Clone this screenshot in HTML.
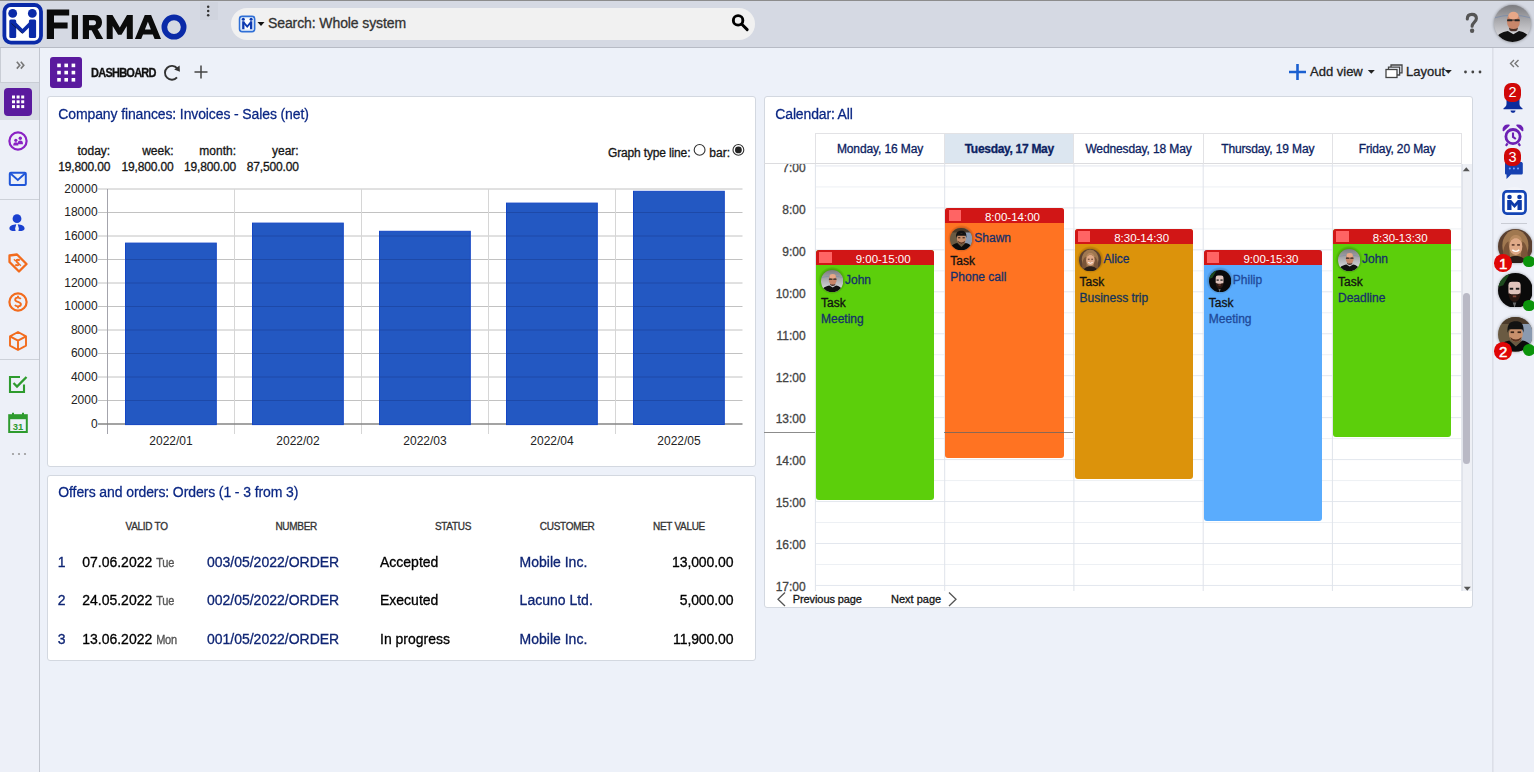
<!DOCTYPE html>
<html><head><meta charset="utf-8">
<style>
*{box-sizing:border-box}
html,body{margin:0;padding:0}
body{width:1534px;height:772px;overflow:hidden;position:relative;background:#edf1f9;font-family:"Liberation Sans",sans-serif;color:#222}
.a{position:absolute}
.t{position:absolute;line-height:1;white-space:nowrap;-webkit-text-stroke:0.3px currentColor}
.hdr{left:0;top:0;width:1534px;height:48px;background:#d5d9e3;border-top:1px solid #8c8c8c;border-bottom:1px solid #b7bbc5}
.panel{position:absolute;background:#fff;border:1px solid #d3d8e0;border-radius:3px}
.nv{color:#0f2574}
.sy{transform:scaleY(1.09);transform-origin:0 0.846em}
.tx{color:#151515}
.tk{color:#000}
.ptitle{font-size:14px;letter-spacing:-0.12px;color:#0b2784;-webkit-text-stroke:0.25px currentColor}
</style></head><body>
<svg width="0" height="0" style="position:absolute">
<defs>
<clipPath id="cc"><circle cx="20" cy="20" r="20"/></clipPath>
<linearGradient id="gJohn" x1="0" y1="0" x2="0" y2="1"><stop offset="0" stop-color="#7c7c80"/><stop offset="0.55" stop-color="#b8b8bc"/><stop offset="1" stop-color="#e4e4e8"/></linearGradient>
<symbol id="avJohn" viewBox="0 0 40 40"><g clip-path="url(#cc)">
<rect width="40" height="40" fill="url(#gJohn)"/>
<path d="M0 14 Q20 8 40 14" stroke="#5a7ab0" stroke-width="0.8" fill="none" opacity="0.6"/>
<ellipse cx="21" cy="17.5" rx="7" ry="9.3" fill="#c8866a"/>
<ellipse cx="21" cy="11.5" rx="5.5" ry="4.2" fill="#e8a888"/>
<rect x="14.2" y="15.3" width="5.6" height="2.4" rx="0.8" fill="#262626"/><rect x="22.2" y="15.3" width="5.6" height="2.4" rx="0.8" fill="#262626"/>
<rect x="19.6" y="15.8" width="2.8" height="0.9" fill="#262626"/>
<path d="M16 24.5 Q21 27.5 26 24.5 L25 27.5 Q21 29.5 17 27.5Z" fill="#4a3028"/>
<path d="M0 40 C2 32 9 29 15 28 L21 31.5 L27 28 C33 29 38 32 40 40Z" fill="#101010"/>
</g></symbol>
<symbol id="avShawn" viewBox="0 0 40 40"><g clip-path="url(#cc)">
<rect width="40" height="40" fill="#6a5a42"/>
<rect x="27" y="0" width="13" height="40" fill="#8a9ab0"/>
<rect x="0" y="0" width="40" height="8" fill="#4a3a2a"/>
<path d="M11 18 C10 7 15 5 20.5 5 C26 5 30 7 29.5 18 C28 12 25 10.5 20.5 10.5 C16 10.5 13 12 11 18Z" fill="#121212"/>
<ellipse cx="20.5" cy="19.5" rx="8" ry="9" fill="#c8906c"/>
<path d="M12.5 14 C14 10.5 17 10 20.5 10 C24 10 27 10.5 28.5 14 Z" fill="#121212"/>
<rect x="14.5" y="16.5" width="4" height="2" fill="#3a2418"/><rect x="22.5" y="16.5" width="4" height="2" fill="#3a2418"/>
<path d="M14 23 Q20.5 29 27 23 L26 26 Q20.5 31 15 26Z" fill="#5a3422"/>
<path d="M0 40 C1 31 7 28 13 27 L20.5 34 L28 27 C34 28 39 31 40 40Z" fill="#0c0c0c"/>
</g></symbol>
<symbol id="avAlice" viewBox="0 0 40 40"><g clip-path="url(#cc)">
<rect width="40" height="40" fill="#5a4030"/>
<ellipse cx="20" cy="19" rx="15" ry="18" fill="#a07850"/>
<path d="M6 34 C5 24 8 16 12 14 L14 34Z M34 34 C35 24 32 16 28 14 L26 34Z" fill="#7a5438"/>
<ellipse cx="20.5" cy="20" rx="7.5" ry="9.8" fill="#e0aa88"/>
<path d="M13 15 C14 8 18 7 20.5 7 C23 7 27 8 28 15 C25 11 22 10.5 20.5 10.5 C19 10.5 16 11 13 15Z" fill="#b88a60"/>
<rect x="15.8" y="17.5" width="3.2" height="1.6" fill="#4a2a20"/><rect x="22" y="17.5" width="3.2" height="1.6" fill="#4a2a20"/>
<path d="M16.5 24 Q20.5 27.5 24.5 24" stroke="#fff" stroke-width="1.6" fill="none"/>
<path d="M8 40 C10 33 15 31 20.5 31 C26 31 31 33 33 40Z" fill="#2a1e18"/>
</g></symbol>
<symbol id="avPhilip" viewBox="0 0 40 40"><g clip-path="url(#cc)">
<rect width="40" height="40" fill="#0a0a0a"/>
<path d="M0 0 H14 L6 14 L0 16Z" fill="#1e4a1e"/>
<rect x="12" y="10" width="14" height="16" rx="4" fill="#e0c4bc"/>
<rect x="13.5" y="17" width="4" height="2.2" fill="#1a1a1a"/><rect x="20.5" y="17" width="4" height="2.2" fill="#1a1a1a"/>
<path d="M12 22 C12.5 31 16 33 19 33 C22 33 25.5 31 26 22 C24 25 22 24.5 19 24.5 C16 24.5 14 25 12 22Z" fill="#2a1812"/>
<path d="M17 26 H21 V28 H17Z" fill="#8a4a3a"/>
<path d="M17 34 L19 40 L21 34Z" fill="#6a6a6a"/>
</g></symbol>
</defs></svg>

<!-- HEADER -->
<div class="a hdr"></div>
<!-- logo icon -->
<svg class="a" style="left:0;top:0" width="48" height="48" viewBox="0 0 48 48">
  <rect x="4.4" y="5" width="36.6" height="37.6" rx="6.5" fill="#fff" stroke="#0a2aa8" stroke-width="3.8"/>
  <circle cx="12.7" cy="13.4" r="4.4" fill="#0a2aa8"/>
  <circle cx="32.3" cy="13.4" r="4.4" fill="#0a2aa8"/>
  <rect x="9.3" y="19.6" width="6.9" height="18.3" rx="1.5" fill="#0a2aa8"/>
  <rect x="28.9" y="19.6" width="7.2" height="18.3" rx="1.5" fill="#0a2aa8"/>
  <path d="M12.5 21.5 L22.5 31.5 L30.5 23.5" fill="none" stroke="#0a2aa8" stroke-width="3.8" stroke-linejoin="round"/><path d="M11.5 23.5 L22.5 33.5" fill="none" stroke="#111" stroke-width="1" opacity="0.6"/>
</svg>
<!-- FIRMAO letters -->
<svg class="a" style="left:0;top:0" width="200" height="48" viewBox="0 0 200 48">
  <g fill="#0b0b0b">
    <path d="M46.8 9.4 H69.2 V15.4 H54 V22.4 H67.6 V28.6 H54 V39.1 H46.8 Z"/>
    <rect x="71.8" y="15.1" width="6.2" height="24"/>
    <path d="M82.8 15.1 H94 C99.5 15.1 102 18.3 102 22.6 C102 25.9 100.3 28.2 97.6 29.3 L103.2 39.1 H96.3 L91.6 30.3 H89 V39.1 H82.8 Z M89 20.2 V25.3 H93.6 C95.3 25.3 96 24.2 96 22.8 C96 21.3 95.3 20.2 93.6 20.2 Z"/>
    <path d="M106.7 39.1 V15.1 H112.5 L119.8 27.5 L127 15.1 H132.8 V39.1 H126.8 V26 L121.5 34.8 H118.1 L112.7 26 V39.1 Z"/>
    <path d="M134.9 39.1 L144.8 15.1 H151.1 L161 39.1 H154.6 L152.8 34.5 H143 L141.2 39.1 Z M144.9 29.4 H150.9 L147.9 21.7 Z"/>
  </g>
  <circle cx="174" cy="27.1" r="9.65" fill="none" stroke="#0a2aa8" stroke-width="5.7"/>
</svg>
<!-- vertical dots -->
<div class="a" style="left:200px;top:2px;width:18px;height:18px;background:#d0d4de"></div>
<svg class="a" style="left:200px;top:2px" width="18" height="18"><g fill="#333"><circle cx="8.2" cy="4.8" r="1.25"/><circle cx="8.2" cy="9.1" r="1.25"/><circle cx="8.2" cy="13.3" r="1.25"/></g></svg>
<!-- search -->
<div class="a" style="left:231px;top:8px;width:524px;height:32px;border-radius:16px;background:#f1f1f1"></div>
<svg class="a" style="left:238px;top:15px" width="18" height="18" viewBox="0 0 18 18">
  <rect x="1.6" y="1.3" width="15" height="15.3" rx="2.6" fill="#fff" stroke="#2f6fd6" stroke-width="1.7"/>
  <rect x="3" y="2.7" width="12.2" height="12.5" rx="1" fill="none" stroke="#bcd4f4" stroke-width="1"/>
  <circle cx="5.3" cy="4.2" r="1.5" fill="#0d3ab0"/><circle cx="13.1" cy="4.2" r="1.5" fill="#0d3ab0"/>
  <path d="M5.3 6.3 V14.3 M13.1 6.3 V14.3" fill="none" stroke="#0d3ab0" stroke-width="2.3"/>
  <path d="M5.6 7.3 L9.2 11.6 L12.8 7.3" fill="none" stroke="#0d3ab0" stroke-width="1.8"/>
</svg>
<svg class="a" style="left:257px;top:21px" width="8" height="6"><path d="M0.5 1 H7.5 L4 5 Z" fill="#111"/></svg>
<div class="t" style="left:268px;top:16.4px;font-size:14px;letter-spacing:-0.1px;color:#333">Search: Whole system</div>
<svg class="a" style="left:728px;top:11px" width="24" height="24" viewBox="0 0 24 24">
  <circle cx="10.1" cy="9.4" r="4.75" fill="none" stroke="#000" stroke-width="2.9"/>
  <path d="M13.6 13 L19.2 18.6" stroke="#000" stroke-width="2.9" stroke-linecap="round"/>
</svg>
<!-- help -->
<svg class="a" style="left:1462px;top:10px" width="20" height="26" viewBox="0 0 20 26"><path d="M5.3 9 C5.3 5.6 7.4 4.4 9.9 4.4 C12.5 4.4 14.4 5.9 14.4 8.5 C14.4 11.8 10.1 12.4 10.1 16.3" fill="none" stroke="#555" stroke-width="3.1" stroke-linecap="round"/><circle cx="10.1" cy="20.8" r="2.2" fill="#555"/></svg>
<!-- user avatar -->
<svg class="a" style="left:1494px;top:5px;filter:drop-shadow(0 0 1.5px rgba(0,0,0,0.4))" width="37" height="37" viewBox="0 0 40 40"><use href="#avJohn"/></svg>

<!-- LEFT SIDEBAR -->
<div class="a" style="left:0;top:48px;width:40px;height:724px;background:#edf0f8;border-right:1px solid #c2c6cf"></div>
<div class="a" style="left:0;top:48px;width:39px;height:35px;background:#e9ecf3;border-left:1px solid #c9cdd5;border-bottom:1px solid #c9cdd5"></div>
<svg class="a" style="left:14px;top:58px" width="14" height="14" viewBox="0 0 14 14"><path d="M2.8 3.8 L5.8 7.2 L2.8 10.6 M6.8 3.8 L9.8 7.2 L6.8 10.6" fill="none" stroke="#777" stroke-width="1.6"/></svg>
<div class="a" style="left:0;top:83px;width:39px;height:37px;background:#d8dce5"></div>
<div class="a" style="left:4px;top:88px;width:28px;height:28px;border-radius:4px;background:#5a1a9e"></div>
<svg class="a" style="left:4px;top:88px" width="28" height="28"><g fill="#fff">
<rect x="8" y="7.5" width="3" height="3"/><rect x="12.6" y="7.5" width="3" height="3"/><rect x="17.2" y="7.5" width="3" height="3"/>
<rect x="8" y="12.3" width="3" height="3"/><rect x="12.6" y="12.3" width="3" height="3"/><rect x="17.2" y="12.3" width="3" height="3"/>
<rect x="8" y="17.1" width="3" height="3"/><rect x="12.6" y="17.1" width="3" height="3"/><rect x="17.2" y="17.1" width="3" height="3"/></g></svg>
<!-- contacts circle -->
<svg class="a" style="left:6px;top:129px" width="24" height="24" viewBox="0 0 24 24">
  <circle cx="12" cy="12" r="8.6" fill="none" stroke="#8a22c4" stroke-width="2.2"/>
  <g fill="#8a22c4"><circle cx="14.3" cy="9.3" r="1.7"/><path d="M11.6 15.2 C11.6 12.4 12.6 11.4 14.3 11.4 C16 11.4 17 12.4 17 15.2 Z"/>
  <circle cx="9.8" cy="11.3" r="1.6"/><path d="M7.2 16.6 C7.2 14.2 8.1 13.3 9.8 13.3 C11.5 13.3 12.4 14.2 12.4 16.6 Z"/></g>
</svg>
<!-- mail -->
<svg class="a" style="left:8px;top:171px" width="20" height="16" viewBox="0 0 20 16">
  <rect x="1.8" y="1.8" width="16" height="12.2" rx="1" fill="none" stroke="#1f55d8" stroke-width="2"/>
  <path d="M2.5 2.5 L9.8 9 L17 2.5" fill="none" stroke="#1f55d8" stroke-width="1.8"/>
</svg>
<div class="a" style="left:0;top:199px;width:39px;height:1px;background:#cdd1d9"></div>
<!-- person -->
<svg class="a" style="left:7px;top:212px" width="22" height="22" viewBox="0 0 22 22">
  <g fill="#1a40d0"><circle cx="10" cy="6.7" r="4.4"/>
  <path d="M9.3 12.3 C5.5 12.5 2.4 14 2.4 16.5 C2.4 18.5 5.5 19.3 8.6 19 L8.1 16.5 Z"/>
  <path d="M10.7 12.3 C14.5 12.5 17.6 14 17.6 16.5 C17.6 18.5 14.5 19.3 11.4 19 L11.9 16.5 Z"/></g>
</svg>
<!-- tag -->
<svg class="a" style="left:7px;top:252px" width="22" height="22" viewBox="0 0 22 22">
  <path d="M2.5 3.5 L10 2.5 L19.5 12 L12 19.5 L2.5 10 Z" fill="none" stroke="#f26b1d" stroke-width="2.3" stroke-linejoin="round"/>
  <path d="M12.8 8.6 C11.5 7.3 9.6 7.6 9.3 8.8 C9 10.2 12 10.8 11.7 12.3 C11.4 13.5 9.5 13.6 8.3 12.4 M8 7.6 L7.2 8.4 M13.6 12.6 L12.8 13.4" fill="none" stroke="#f26b1d" stroke-width="2.1"/>
</svg>
<!-- dollar -->
<svg class="a" style="left:7px;top:291px" width="22" height="22" viewBox="0 0 22 22">
  <circle cx="11" cy="11" r="8.6" fill="none" stroke="#f26b1d" stroke-width="2.2"/>
  <path d="M13.8 7.9 C13 6.9 11.8 6.6 10.8 6.6 C9.2 6.6 8.2 7.5 8.2 8.7 C8.2 11.3 13.9 10.6 13.9 13.3 C13.9 14.6 12.7 15.4 11 15.4 C9.8 15.4 8.6 14.9 7.9 14 M11 4.8 V6.6 M11 15.4 V17.2" fill="none" stroke="#f26b1d" stroke-width="1.9"/>
</svg>
<!-- box -->
<svg class="a" style="left:7px;top:330px" width="22" height="22" viewBox="0 0 22 22">
  <path d="M11 2 L19 6.3 V15.6 L11 20 L3 15.6 V6.3 Z M3 6.3 L11 10.7 L19 6.3 M11 10.7 V20" fill="none" stroke="#f26b1d" stroke-width="1.9" stroke-linejoin="round"/>
</svg>
<div class="a" style="left:0;top:359px;width:39px;height:1px;background:#cdd1d9"></div>
<!-- check -->
<svg class="a" style="left:7px;top:373px" width="22" height="22" viewBox="0 0 22 22">
  <path d="M17 11.5 V19 H3 V4 H13" fill="none" stroke="#2e9b2e" stroke-width="2.1"/>
  <path d="M6.5 10 L10 13.5 L19.5 4" fill="none" stroke="#2e9b2e" stroke-width="2.3"/>
</svg>
<!-- calendar -->
<svg class="a" style="left:7px;top:411px" width="22" height="23" viewBox="0 0 22 23">
  <rect x="2.2" y="4.2" width="17.6" height="16.8" fill="none" stroke="#2e9b2e" stroke-width="2"/>
  <rect x="2.2" y="4.2" width="17.6" height="4" fill="#2e9b2e"/>
  <path d="M6 1.8 V5 M16 1.8 V5" stroke="#2e9b2e" stroke-width="2"/>
  <text x="11" y="18.8" text-anchor="middle" font-family="Liberation Sans" font-weight="700" font-size="9.5" fill="#2e9b2e">31</text>
</svg>
<svg class="a" style="left:10px;top:451px" width="18" height="6"><g fill="#999"><circle cx="3" cy="3" r="1.1"/><circle cx="9" cy="3" r="1.1"/><circle cx="15" cy="3" r="1.1"/></g></svg>

<!-- RIGHT SIDEBAR -->
<div class="a" style="left:1492px;top:48px;width:42px;height:724px;background:#edf0f8;border-left:1px solid #dcdfe8"></div><div class="a" style="left:1493px;top:48px;width:1px;height:724px;background:#e3e6ee"></div>


<svg class="a" style="left:1507px;top:57px" width="14" height="14" viewBox="0 0 14 14"><path d="M11.5 3 L8 6.5 L11.5 10 M7 3 L3.5 6.5 L7 10" fill="none" stroke="#777" stroke-width="1.4"/></svg>
<svg class="a" style="left:1502px;top:84px" width="22" height="30" viewBox="0 0 22 30"><path d="M4.5 12 C4.5 6.5 7 4 11 4 C15 4 17.5 6.5 17.5 12 V20 C17.5 22 19 23.5 20.5 24.3 V25.3 H1.5 V24.3 C3 23.5 4.5 22 4.5 20 Z" fill="#0c2c9c"/><path d="M8.5 26.5 H13.5 C13.3 28 12.4 28.8 11 28.8 C9.6 28.8 8.7 28 8.5 26.5 Z" fill="#0c2c9c"/></svg>
<div class="a" style="left:1504px;top:82.6px;width:17px;height:19px;border-radius:7px;background:#d00808"></div>
<div class="t" style="left:1504px;width:17px;text-align:center;top:85px;font-size:14.5px;color:#fff;-webkit-text-stroke:0">2</div>
<svg class="a" style="left:1502px;top:124px" width="22" height="23" viewBox="0 0 22 23"><circle cx="11" cy="12.6" r="7.1" fill="none" stroke="#6c20b4" stroke-width="2.8"/><path d="M11 8.6 V12.9 L13.8 15" fill="none" stroke="#6c20b4" stroke-width="2.1"/><path d="M1.5 6.3 C1.2 2.8 3.5 0.9 6.8 1.4 Z M20.5 6.3 C20.8 2.8 18.5 0.9 15.2 1.4 Z" fill="#6c20b4" stroke="#6c20b4" stroke-width="1.8" stroke-linejoin="round"/><path d="M5.6 19.3 L3.9 21.8 M16.4 19.3 L18.1 21.8" stroke="#6c20b4" stroke-width="2.2"/></svg>
<svg class="a" style="left:1502px;top:160px" width="22" height="22" viewBox="0 0 22 22"><path d="M3 3.5 C3 2.5 3.6 2 4.5 2 H19 C20 2 20.8 2.6 20.8 3.5 V13 C20.8 14 20 14.6 19 14.6 H9 L4.5 19 V14.6 C3.6 14.6 3 14 3 13 Z" fill="#1640b0"/><g fill="#7aa0ff"><circle cx="7.8" cy="8.5" r="1"/><circle cx="11.9" cy="8.5" r="1"/><circle cx="16" cy="8.5" r="1"/></g></svg>
<div class="a" style="left:1504px;top:148px;width:17px;height:18px;border-radius:7px;background:#d00808"></div>
<div class="t" style="left:1504px;width:17px;text-align:center;top:150px;font-size:14.5px;color:#fff;-webkit-text-stroke:0">3</div>
<div class="a" style="left:1499px;top:187px;width:31px;height:31px;border-radius:50%;background:#f2f4fa"></div>
<svg class="a" style="left:1502px;top:190px" width="25" height="25" viewBox="0 0 25 25"><rect x="1.4" y="1.4" width="22.2" height="22.2" rx="3.5" fill="#fff" stroke="#1545b5" stroke-width="2.6"/><circle cx="7.5" cy="7" r="2.3" fill="#0d3aa8"/><circle cx="17.5" cy="7" r="2.3" fill="#0d3aa8"/><rect x="5.2" y="10" width="4.3" height="10" fill="#0d3aa8"/><rect x="15.5" y="10" width="4.3" height="10" fill="#0d3aa8"/><path d="M8.5 11.5 L12.5 16 L16.5 11.5" fill="none" stroke="#0d3aa8" stroke-width="2.8"/></svg>
<div class="a" style="left:1500.5px;top:223px;width:26.5px;height:1px;background:#c9ccd4"></div>
<svg class="a" style="left:1497.5px;top:228.7px;filter:drop-shadow(0 0 1.5px rgba(0,0,0,0.35));" width="34.8" height="34.8" viewBox="0 0 40 40"><use href="#avAlice"/></svg>
<div class="a" style="left:1523.3px;top:255.89999999999998px;width:11.5px;height:11.5px;border-radius:50%;background:#0b940b"></div>
<div class="a" style="left:1494.3px;top:254.0px;width:17.5px;height:17.5px;border-radius:50%;background:#e00606"></div>
<div class="t" style="left:1494.3px;width:17.5px;text-align:center;top:256.0px;font-size:15px;font-weight:400;color:#fff;-webkit-text-stroke:0.5px #fff">1</div>
<svg class="a" style="left:1497.5px;top:272.5px;filter:drop-shadow(0 0 1.5px rgba(0,0,0,0.35));" width="34.8" height="34.8" viewBox="0 0 40 40"><use href="#avPhilip"/></svg>
<div class="a" style="left:1523.3px;top:299.7px;width:11.5px;height:11.5px;border-radius:50%;background:#0b940b"></div>
<svg class="a" style="left:1497.5px;top:317px;filter:drop-shadow(0 0 1.5px rgba(0,0,0,0.35));" width="34.8" height="34.8" viewBox="0 0 40 40"><use href="#avShawn"/></svg>
<div class="a" style="left:1523.3px;top:344.2px;width:11.5px;height:11.5px;border-radius:50%;background:#0b940b"></div>
<div class="a" style="left:1494.3px;top:342.3px;width:17.5px;height:17.5px;border-radius:50%;background:#e00606"></div>
<div class="t" style="left:1494.3px;width:17.5px;text-align:center;top:344.3px;font-size:15px;font-weight:400;color:#fff;-webkit-text-stroke:0.5px #fff">2</div>
<!-- TOOLBAR -->
<div class="a" style="left:50px;top:57px;width:32px;height:31px;border-radius:3px;background:#5a1a9e"></div>
<svg class="a" style="left:50px;top:57px" width="32" height="31"><g fill="#fff">
<rect x="7.2" y="6.6" width="3.6" height="3.6"/><rect x="14.4" y="6.6" width="3.6" height="3.6"/><rect x="21.6" y="6.6" width="3.6" height="3.6"/>
<rect x="7.2" y="13.8" width="3.6" height="3.6"/><rect x="14.4" y="13.8" width="3.6" height="3.6"/><rect x="21.6" y="13.8" width="3.6" height="3.6"/>
<rect x="7.2" y="21" width="3.6" height="3.6"/><rect x="14.4" y="21" width="3.6" height="3.6"/><rect x="21.6" y="21" width="3.6" height="3.6"/></g></svg>
<div class="t" style="left:91px;top:67.7px;font-size:11px;font-weight:700;letter-spacing:-0.75px;color:#111;transform:scaleY(1.12);transform-origin:0 9.3px">DASHBOARD</div>
<svg class="a" style="left:162px;top:62px" width="20" height="20" viewBox="0 0 20 20">
  <path d="M15.2 6.4 A6.9 6.9 0 1 0 15 15.4" fill="none" stroke="#333" stroke-width="1.9"/>
  <path d="M17.6 3.4 L17.9 9.8 L12.2 7.6 Z" fill="#333"/>
</svg>
<svg class="a" style="left:193px;top:64px" width="16" height="16" viewBox="0 0 16 16"><path d="M8 1.6 V14.4 M1.5 8 H14.5" stroke="#444" stroke-width="1.5"/></svg>
<!-- add view etc -->
<svg class="a" style="left:1288px;top:63px" width="19" height="18" viewBox="0 0 19 18"><path d="M9.5 1 V17 M1 9 H18" stroke="#1a5fd0" stroke-width="2.6"/></svg>
<div class="t" style="left:1310px;top:64.8px;font-size:13px;color:#222">Add view</div>
<svg class="a" style="left:1367px;top:69px" width="9" height="6"><path d="M0.8 1 H7.8 L4.3 4.8 Z" fill="#222"/></svg>
<svg class="a" style="left:1385px;top:64px" width="18" height="15" viewBox="0 0 18 15">
  <rect x="1" y="5.5" width="11" height="8" fill="#fff" stroke="#444" stroke-width="1.3"/>
  <path d="M3.5 5.5 V3.2 H14.6 V11 H12 M6 3.2 V1 H17 V8.8 H14.6" fill="none" stroke="#444" stroke-width="1.3"/>
</svg>
<div class="t" style="left:1406px;top:64.8px;font-size:13px;color:#222">Layout</div>
<svg class="a" style="left:1444px;top:69px" width="9" height="6"><path d="M0.8 1 H7.8 L4.3 4.8 Z" fill="#222"/></svg>
<svg class="a" style="left:1463px;top:68px" width="20" height="8"><g fill="#444"><circle cx="2.5" cy="4" r="1.4"/><circle cx="9.8" cy="4" r="1.4"/><circle cx="17" cy="4" r="1.4"/></g></svg>


<div class="panel" style="left:47px;top:96px;width:709px;height:371px"></div>
<div class="t ptitle sy" style="left:58.3px;top:106.6px">Company finances: Invoices - Sales (net)</div>
<div class="t tx" style="right:1423.8px;top:144.8px;font-size:12px">today:</div>
<div class="t tx" style="right:1423.8px;top:160.7px;font-size:12px;letter-spacing:-0.15px">19,800.00</div>
<div class="t tx" style="right:1360.5px;top:144.8px;font-size:12px">week:</div>
<div class="t tx" style="right:1360.5px;top:160.7px;font-size:12px;letter-spacing:-0.15px">19,800.00</div>
<div class="t tx" style="right:1298px;top:144.8px;font-size:12px">month:</div>
<div class="t tx" style="right:1298px;top:160.7px;font-size:12px;letter-spacing:-0.15px">19,800.00</div>
<div class="t tx" style="right:1235.3px;top:144.8px;font-size:12px">year:</div>
<div class="t tx" style="right:1235.3px;top:160.7px;font-size:12px;letter-spacing:-0.15px">87,500.00</div>
<div class="t tx" style="left:608px;top:146.5px;font-size:12px;letter-spacing:-0.15px">Graph type line:</div>
<div class="t tx" style="left:709.3px;top:146.5px;font-size:12px">bar:</div>
<svg class="a" style="left:692px;top:143px" width="15" height="14"><circle cx="7.6" cy="6.9" r="5.4" fill="#fff" stroke="#333" stroke-width="1.1"/></svg>
<svg class="a" style="left:731px;top:143px" width="15" height="14"><circle cx="7.4" cy="6.9" r="5.4" fill="#fff" stroke="#333" stroke-width="1.1"/><circle cx="7.4" cy="6.9" r="3.4" fill="#222"/></svg>
<svg class="a" style="left:0;top:0" width="760" height="470"><line x1="98" y1="400.5" x2="742.5" y2="400.5" stroke="#c2c2c2" stroke-width="1"/><line x1="98" y1="377.0" x2="742.5" y2="377.0" stroke="#c2c2c2" stroke-width="1"/><line x1="98" y1="353.5" x2="742.5" y2="353.5" stroke="#c2c2c2" stroke-width="1"/><line x1="98" y1="330.0" x2="742.5" y2="330.0" stroke="#c2c2c2" stroke-width="1"/><line x1="98" y1="306.5" x2="742.5" y2="306.5" stroke="#c2c2c2" stroke-width="1"/><line x1="98" y1="283.0" x2="742.5" y2="283.0" stroke="#c2c2c2" stroke-width="1"/><line x1="98" y1="259.5" x2="742.5" y2="259.5" stroke="#c2c2c2" stroke-width="1"/><line x1="98" y1="236.0" x2="742.5" y2="236.0" stroke="#c2c2c2" stroke-width="1"/><line x1="98" y1="212.5" x2="742.5" y2="212.5" stroke="#c2c2c2" stroke-width="1"/><line x1="98" y1="189.0" x2="742.5" y2="189.0" stroke="#c2c2c2" stroke-width="1"/><line x1="107.5" y1="189" x2="107.5" y2="434" stroke="#d6d6d6" stroke-width="1"/><line x1="234.5" y1="189" x2="234.5" y2="434" stroke="#d6d6d6" stroke-width="1"/><line x1="361.5" y1="189" x2="361.5" y2="434" stroke="#d6d6d6" stroke-width="1"/><line x1="488.5" y1="189" x2="488.5" y2="434" stroke="#d6d6d6" stroke-width="1"/><line x1="615.5" y1="189" x2="615.5" y2="434" stroke="#d6d6d6" stroke-width="1"/><line x1="107.5" y1="189" x2="107.5" y2="434" stroke="#a4a4ac" stroke-width="1"/><line x1="98" y1="424.0" x2="742.5" y2="424.0" stroke="#858585" stroke-width="1.4"/><rect x="125.5" y="243.1" width="90.8" height="181.5" fill="#2358c2" stroke="#1446c4" stroke-width="1"/><line x1="126" y1="400.5" x2="215.8" y2="400.5" stroke="rgba(0,0,40,0.17)" stroke-width="1"/><line x1="126" y1="377.0" x2="215.8" y2="377.0" stroke="rgba(0,0,40,0.17)" stroke-width="1"/><line x1="126" y1="353.5" x2="215.8" y2="353.5" stroke="rgba(0,0,40,0.17)" stroke-width="1"/><line x1="126" y1="330.0" x2="215.8" y2="330.0" stroke="rgba(0,0,40,0.17)" stroke-width="1"/><line x1="126" y1="306.5" x2="215.8" y2="306.5" stroke="rgba(0,0,40,0.17)" stroke-width="1"/><line x1="126" y1="283.0" x2="215.8" y2="283.0" stroke="rgba(0,0,40,0.17)" stroke-width="1"/><line x1="126" y1="259.5" x2="215.8" y2="259.5" stroke="rgba(0,0,40,0.17)" stroke-width="1"/><rect x="252.5" y="223.1" width="90.8" height="201.5" fill="#2358c2" stroke="#1446c4" stroke-width="1"/><line x1="253" y1="400.5" x2="342.8" y2="400.5" stroke="rgba(0,0,40,0.17)" stroke-width="1"/><line x1="253" y1="377.0" x2="342.8" y2="377.0" stroke="rgba(0,0,40,0.17)" stroke-width="1"/><line x1="253" y1="353.5" x2="342.8" y2="353.5" stroke="rgba(0,0,40,0.17)" stroke-width="1"/><line x1="253" y1="330.0" x2="342.8" y2="330.0" stroke="rgba(0,0,40,0.17)" stroke-width="1"/><line x1="253" y1="306.5" x2="342.8" y2="306.5" stroke="rgba(0,0,40,0.17)" stroke-width="1"/><line x1="253" y1="283.0" x2="342.8" y2="283.0" stroke="rgba(0,0,40,0.17)" stroke-width="1"/><line x1="253" y1="259.5" x2="342.8" y2="259.5" stroke="rgba(0,0,40,0.17)" stroke-width="1"/><line x1="253" y1="236.0" x2="342.8" y2="236.0" stroke="rgba(0,0,40,0.17)" stroke-width="1"/><rect x="379.5" y="231.3" width="90.8" height="193.3" fill="#2358c2" stroke="#1446c4" stroke-width="1"/><line x1="380" y1="400.5" x2="469.8" y2="400.5" stroke="rgba(0,0,40,0.17)" stroke-width="1"/><line x1="380" y1="377.0" x2="469.8" y2="377.0" stroke="rgba(0,0,40,0.17)" stroke-width="1"/><line x1="380" y1="353.5" x2="469.8" y2="353.5" stroke="rgba(0,0,40,0.17)" stroke-width="1"/><line x1="380" y1="330.0" x2="469.8" y2="330.0" stroke="rgba(0,0,40,0.17)" stroke-width="1"/><line x1="380" y1="306.5" x2="469.8" y2="306.5" stroke="rgba(0,0,40,0.17)" stroke-width="1"/><line x1="380" y1="283.0" x2="469.8" y2="283.0" stroke="rgba(0,0,40,0.17)" stroke-width="1"/><line x1="380" y1="259.5" x2="469.8" y2="259.5" stroke="rgba(0,0,40,0.17)" stroke-width="1"/><line x1="380" y1="236.0" x2="469.8" y2="236.0" stroke="rgba(0,0,40,0.17)" stroke-width="1"/><rect x="506.5" y="203.1" width="90.8" height="221.5" fill="#2358c2" stroke="#1446c4" stroke-width="1"/><line x1="507" y1="400.5" x2="596.8" y2="400.5" stroke="rgba(0,0,40,0.17)" stroke-width="1"/><line x1="507" y1="377.0" x2="596.8" y2="377.0" stroke="rgba(0,0,40,0.17)" stroke-width="1"/><line x1="507" y1="353.5" x2="596.8" y2="353.5" stroke="rgba(0,0,40,0.17)" stroke-width="1"/><line x1="507" y1="330.0" x2="596.8" y2="330.0" stroke="rgba(0,0,40,0.17)" stroke-width="1"/><line x1="507" y1="306.5" x2="596.8" y2="306.5" stroke="rgba(0,0,40,0.17)" stroke-width="1"/><line x1="507" y1="283.0" x2="596.8" y2="283.0" stroke="rgba(0,0,40,0.17)" stroke-width="1"/><line x1="507" y1="259.5" x2="596.8" y2="259.5" stroke="rgba(0,0,40,0.17)" stroke-width="1"/><line x1="507" y1="236.0" x2="596.8" y2="236.0" stroke="rgba(0,0,40,0.17)" stroke-width="1"/><line x1="507" y1="212.5" x2="596.8" y2="212.5" stroke="rgba(0,0,40,0.17)" stroke-width="1"/><rect x="633.5" y="191.3" width="90.8" height="233.2" fill="#2358c2" stroke="#1446c4" stroke-width="1"/><line x1="634" y1="400.5" x2="723.8" y2="400.5" stroke="rgba(0,0,40,0.17)" stroke-width="1"/><line x1="634" y1="377.0" x2="723.8" y2="377.0" stroke="rgba(0,0,40,0.17)" stroke-width="1"/><line x1="634" y1="353.5" x2="723.8" y2="353.5" stroke="rgba(0,0,40,0.17)" stroke-width="1"/><line x1="634" y1="330.0" x2="723.8" y2="330.0" stroke="rgba(0,0,40,0.17)" stroke-width="1"/><line x1="634" y1="306.5" x2="723.8" y2="306.5" stroke="rgba(0,0,40,0.17)" stroke-width="1"/><line x1="634" y1="283.0" x2="723.8" y2="283.0" stroke="rgba(0,0,40,0.17)" stroke-width="1"/><line x1="634" y1="259.5" x2="723.8" y2="259.5" stroke="rgba(0,0,40,0.17)" stroke-width="1"/><line x1="634" y1="236.0" x2="723.8" y2="236.0" stroke="rgba(0,0,40,0.17)" stroke-width="1"/><line x1="634" y1="212.5" x2="723.8" y2="212.5" stroke="rgba(0,0,40,0.17)" stroke-width="1"/><text x="97.6" y="427.9" text-anchor="end" font-family="Liberation Sans" font-size="12" fill="#222">0</text><text x="97.6" y="404.4" text-anchor="end" font-family="Liberation Sans" font-size="12" fill="#222">2000</text><text x="97.6" y="380.9" text-anchor="end" font-family="Liberation Sans" font-size="12" fill="#222">4000</text><text x="97.6" y="357.4" text-anchor="end" font-family="Liberation Sans" font-size="12" fill="#222">6000</text><text x="97.6" y="333.9" text-anchor="end" font-family="Liberation Sans" font-size="12" fill="#222">8000</text><text x="97.6" y="310.4" text-anchor="end" font-family="Liberation Sans" font-size="12" fill="#222">10000</text><text x="97.6" y="286.9" text-anchor="end" font-family="Liberation Sans" font-size="12" fill="#222">12000</text><text x="97.6" y="263.4" text-anchor="end" font-family="Liberation Sans" font-size="12" fill="#222">14000</text><text x="97.6" y="239.9" text-anchor="end" font-family="Liberation Sans" font-size="12" fill="#222">16000</text><text x="97.6" y="216.4" text-anchor="end" font-family="Liberation Sans" font-size="12" fill="#222">18000</text><text x="97.6" y="192.9" text-anchor="end" font-family="Liberation Sans" font-size="12" fill="#222">20000</text><text x="171" y="445.1" text-anchor="middle" font-family="Liberation Sans" font-size="12" fill="#222">2022/01</text><text x="298" y="445.1" text-anchor="middle" font-family="Liberation Sans" font-size="12" fill="#222">2022/02</text><text x="425" y="445.1" text-anchor="middle" font-family="Liberation Sans" font-size="12" fill="#222">2022/03</text><text x="552" y="445.1" text-anchor="middle" font-family="Liberation Sans" font-size="12" fill="#222">2022/04</text><text x="679" y="445.1" text-anchor="middle" font-family="Liberation Sans" font-size="12" fill="#222">2022/05</text></svg>
<div class="panel" style="left:47px;top:475px;width:709px;height:186px"></div>
<div class="t ptitle sy" style="left:58.3px;top:485.2px;letter-spacing:-0.1px">Offers and orders: Orders (1 - 3 from 3)</div>
<div class="t" style="left:86.6px;width:120px;text-align:center;top:521.5px;font-size:10px;letter-spacing:-0.3px;color:#333">VALID TO</div>
<div class="t" style="left:236.2px;width:120px;text-align:center;top:521.5px;font-size:10px;letter-spacing:-0.3px;color:#333">NUMBER</div>
<div class="t" style="left:393px;width:120px;text-align:center;top:521.5px;font-size:10px;letter-spacing:-0.3px;color:#333">STATUS</div>
<div class="t" style="left:507.20000000000005px;width:120px;text-align:center;top:521.5px;font-size:10px;letter-spacing:-0.3px;color:#333">CUSTOMER</div>
<div class="t" style="left:619px;width:120px;text-align:center;top:521.5px;font-size:10px;letter-spacing:-0.3px;color:#333">NET VALUE</div>
<div class="t nv sy" style="left:57.8px;top:555.1px;font-size:14px">1</div>
<div class="t tk sy" style="left:82.2px;top:555.1px;font-size:14px">07.06.2022 <span style="font-size:11px;color:#555;letter-spacing:-0.2px">Tue</span></div>
<div class="t nv sy" style="left:206.9px;top:555.1px;font-size:14px">003/05/2022/ORDER</div>
<div class="t tk sy" style="left:380px;top:555.1px;font-size:14px">Accepted</div>
<div class="t nv sy" style="left:519.6px;top:555.1px;font-size:14px">Mobile Inc.</div>
<div class="t tk sy" style="right:800.6px;top:555.1px;font-size:14px;letter-spacing:-0.1px">13,000.00</div>
<div class="t nv sy" style="left:57.8px;top:593.1px;font-size:14px">2</div>
<div class="t tk sy" style="left:82.2px;top:593.1px;font-size:14px">24.05.2022 <span style="font-size:11px;color:#555;letter-spacing:-0.2px">Tue</span></div>
<div class="t nv sy" style="left:206.9px;top:593.1px;font-size:14px">002/05/2022/ORDER</div>
<div class="t tk sy" style="left:380px;top:593.1px;font-size:14px">Executed</div>
<div class="t nv sy" style="left:519.6px;top:593.1px;font-size:14px">Lacuno Ltd.</div>
<div class="t tk sy" style="right:800.6px;top:593.1px;font-size:14px;letter-spacing:-0.1px">5,000.00</div>
<div class="t nv sy" style="left:57.8px;top:632.4px;font-size:14px">3</div>
<div class="t tk sy" style="left:82.2px;top:632.4px;font-size:14px">13.06.2022 <span style="font-size:11px;color:#555;letter-spacing:-0.2px">Mon</span></div>
<div class="t nv sy" style="left:206.9px;top:632.4px;font-size:14px">001/05/2022/ORDER</div>
<div class="t tk sy" style="left:380px;top:632.4px;font-size:14px">In progress</div>
<div class="t nv sy" style="left:519.6px;top:632.4px;font-size:14px">Mobile Inc.</div>
<div class="t tk sy" style="right:800.6px;top:632.4px;font-size:14px;letter-spacing:-0.1px">11,900.00</div>
<div class="panel" style="left:764px;top:96px;width:709px;height:512px"></div>
<div class="t ptitle sy" style="left:775.3px;top:107.3px;letter-spacing:-0.15px">Calendar: All</div>
<div class="a" style="left:815px;top:133px;width:647px;height:31px;border-top:1px solid #e2e2e5;border-bottom:1px solid #dcdcdf"></div>
<div class="a" style="left:944.7px;top:134px;width:129.3px;height:29px;background:#dce6f0"></div>
<div class="t" style="left:810.0px;width:140px;text-align:center;top:143.05px;font-size:12px;font-weight:400;letter-spacing:-0.12px;color:#0c2262">Monday, 16 May</div>
<div class="t" style="left:939.3px;width:140px;text-align:center;top:143.05px;font-size:12px;font-weight:700;letter-spacing:-0.3px;color:#0c2262">Tuesday, 17 May</div>
<div class="t" style="left:1068.5px;width:140px;text-align:center;top:143.05px;font-size:12px;font-weight:400;letter-spacing:-0.12px;color:#0c2262">Wednesday, 18 May</div>
<div class="t" style="left:1197.8px;width:140px;text-align:center;top:143.05px;font-size:12px;font-weight:400;letter-spacing:-0.12px;color:#0c2262">Thursday, 19 May</div>
<div class="t" style="left:1327.1px;width:140px;text-align:center;top:143.05px;font-size:12px;font-weight:400;letter-spacing:-0.12px;color:#0c2262">Friday, 20 May</div>
<svg class="a" style="left:764px;top:164px" width="708" height="428" viewBox="764 164 708 428"><line x1="815.4" y1="165.95" x2="1461.5" y2="165.95" stroke="#e3e7ee" stroke-width="1"/><line x1="815.4" y1="186.93" x2="1461.5" y2="186.93" stroke="#edf0f4" stroke-width="1"/><line x1="815.4" y1="207.90" x2="1461.5" y2="207.90" stroke="#e3e7ee" stroke-width="1"/><line x1="815.4" y1="228.88" x2="1461.5" y2="228.88" stroke="#edf0f4" stroke-width="1"/><line x1="815.4" y1="249.85" x2="1461.5" y2="249.85" stroke="#e3e7ee" stroke-width="1"/><line x1="815.4" y1="270.82" x2="1461.5" y2="270.82" stroke="#edf0f4" stroke-width="1"/><line x1="815.4" y1="291.80" x2="1461.5" y2="291.80" stroke="#e3e7ee" stroke-width="1"/><line x1="815.4" y1="312.77" x2="1461.5" y2="312.77" stroke="#edf0f4" stroke-width="1"/><line x1="815.4" y1="333.75" x2="1461.5" y2="333.75" stroke="#e3e7ee" stroke-width="1"/><line x1="815.4" y1="354.73" x2="1461.5" y2="354.73" stroke="#edf0f4" stroke-width="1"/><line x1="815.4" y1="375.70" x2="1461.5" y2="375.70" stroke="#e3e7ee" stroke-width="1"/><line x1="815.4" y1="396.68" x2="1461.5" y2="396.68" stroke="#edf0f4" stroke-width="1"/><line x1="815.4" y1="417.65" x2="1461.5" y2="417.65" stroke="#e3e7ee" stroke-width="1"/><line x1="815.4" y1="438.62" x2="1461.5" y2="438.62" stroke="#edf0f4" stroke-width="1"/><line x1="815.4" y1="459.60" x2="1461.5" y2="459.60" stroke="#e3e7ee" stroke-width="1"/><line x1="815.4" y1="480.58" x2="1461.5" y2="480.58" stroke="#edf0f4" stroke-width="1"/><line x1="815.4" y1="501.55" x2="1461.5" y2="501.55" stroke="#e3e7ee" stroke-width="1"/><line x1="815.4" y1="522.52" x2="1461.5" y2="522.52" stroke="#edf0f4" stroke-width="1"/><line x1="815.4" y1="543.50" x2="1461.5" y2="543.50" stroke="#e3e7ee" stroke-width="1"/><line x1="815.4" y1="564.48" x2="1461.5" y2="564.48" stroke="#edf0f4" stroke-width="1"/><line x1="815.4" y1="585.45" x2="1461.5" y2="585.45" stroke="#e3e7ee" stroke-width="1"/><line x1="815.4" y1="164" x2="815.4" y2="591" stroke="#dfe3ea" stroke-width="1"/><line x1="944.7" y1="164" x2="944.7" y2="591" stroke="#dfe3ea" stroke-width="1"/><line x1="1073.9" y1="164" x2="1073.9" y2="591" stroke="#dfe3ea" stroke-width="1"/><line x1="1203.2" y1="164" x2="1203.2" y2="591" stroke="#dfe3ea" stroke-width="1"/><line x1="1332.4" y1="164" x2="1332.4" y2="591" stroke="#dfe3ea" stroke-width="1"/><line x1="1461.7" y1="164" x2="1461.7" y2="591" stroke="#dfe3ea" stroke-width="1"/></svg>
<div class="a" style="left:814.9px;top:133px;width:1px;height:31px;background:#e2e2e5"></div>
<div class="a" style="left:944.2px;top:133px;width:1px;height:31px;background:#e2e2e5"></div>
<div class="a" style="left:1073.4px;top:133px;width:1px;height:31px;background:#e2e2e5"></div>
<div class="a" style="left:1202.7px;top:133px;width:1px;height:31px;background:#e2e2e5"></div>
<div class="a" style="left:1331.9px;top:133px;width:1px;height:31px;background:#e2e2e5"></div>
<div class="a" style="left:1461.2px;top:133px;width:1px;height:31px;background:#e2e2e5"></div>
<div class="t" style="right:728.3px;top:161.7px;font-size:12px;color:#444">7:00</div>
<div class="t" style="right:728.3px;top:203.7px;font-size:12px;color:#444">8:00</div>
<div class="t" style="right:728.3px;top:245.6px;font-size:12px;color:#444">9:00</div>
<div class="t" style="right:728.3px;top:287.6px;font-size:12px;color:#444">10:00</div>
<div class="t" style="right:728.3px;top:329.5px;font-size:12px;color:#444">11:00</div>
<div class="t" style="right:728.3px;top:371.5px;font-size:12px;color:#444">12:00</div>
<div class="t" style="right:728.3px;top:413.4px;font-size:12px;color:#444">13:00</div>
<div class="t" style="right:728.3px;top:455.4px;font-size:12px;color:#444">14:00</div>
<div class="t" style="right:728.3px;top:497.3px;font-size:12px;color:#444">15:00</div>
<div class="t" style="right:728.3px;top:539.2px;font-size:12px;color:#444">16:00</div>
<div class="t" style="right:728.3px;top:581.2px;font-size:12px;color:#444">17:00</div>
<div class="a" style="left:765px;top:134px;width:50px;height:29px;background:#fff"></div>
<div class="a" style="left:764px;top:163px;width:52px;height:1px;background:#dcdcdf"></div>
<div class="a" style="left:764px;top:431.5px;width:51px;height:1.3px;background:#8c8c8c"></div>
<div class="a" style="left:816.0px;top:250.0px;width:118.3px;height:249.7px;background:#5ccf0b;border-radius:3px;overflow:hidden"><div class="a" style="left:0;top:0;width:100%;height:15.2px;background:#d11616"></div><div class="a" style="left:3.3px;top:1.6px;width:12.4px;height:11.9px;background:#ff6464"></div><div class="t" style="left:16px;right:0;text-align:center;top:3.5px;font-size:11.5px;color:#fff;-webkit-text-stroke:0">9:00-15:00</div><div class="a" style="left:2.3px;top:17.3px;width:27.5px;height:27px;border-radius:50%;background:radial-gradient(circle,rgba(0,0,0,0.22) 55%,rgba(0,0,0,0) 72%)"></div><svg class="a" style="left:4.8px;top:19.8px;" width="22.3" height="22.3" viewBox="0 0 40 40"><use href="#avJohn"/></svg><div class="t" style="left:29px;top:24.1px;font-size:12px;color:#15306a">John</div><div class="t" style="left:5px;top:47.3px;font-size:12px;color:#111">Task</div><div class="t" style="left:5px;top:63.1px;font-size:12px;color:#15306a">Meeting</div></div>
<div class="a" style="left:945.3px;top:208.0px;width:118.3px;height:249.7px;background:#ff7322;border-radius:3px;overflow:hidden"><div class="a" style="left:0;top:0;width:100%;height:15.2px;background:#d11616"></div><div class="a" style="left:3.3px;top:1.6px;width:12.4px;height:11.9px;background:#ff6464"></div><div class="t" style="left:16px;right:0;text-align:center;top:3.5px;font-size:11.5px;color:#fff;-webkit-text-stroke:0">8:00-14:00</div><div class="a" style="left:2.3px;top:17.3px;width:27.5px;height:27px;border-radius:50%;background:radial-gradient(circle,rgba(0,0,0,0.22) 55%,rgba(0,0,0,0) 72%)"></div><svg class="a" style="left:4.8px;top:19.8px;" width="22.3" height="22.3" viewBox="0 0 40 40"><use href="#avShawn"/></svg><div class="t" style="left:29px;top:24.1px;font-size:12px;color:#15306a">Shawn</div><div class="t" style="left:5px;top:47.3px;font-size:12px;color:#111">Task</div><div class="t" style="left:5px;top:63.1px;font-size:12px;color:#15306a">Phone call</div></div>
<div class="a" style="left:1074.5px;top:229.0px;width:118.3px;height:249.7px;background:#dc930b;border-radius:3px;overflow:hidden"><div class="a" style="left:0;top:0;width:100%;height:15.2px;background:#d11616"></div><div class="a" style="left:3.3px;top:1.6px;width:12.4px;height:11.9px;background:#ff6464"></div><div class="t" style="left:16px;right:0;text-align:center;top:3.5px;font-size:11.5px;color:#fff;-webkit-text-stroke:0">8:30-14:30</div><div class="a" style="left:2.3px;top:17.3px;width:27.5px;height:27px;border-radius:50%;background:radial-gradient(circle,rgba(0,0,0,0.22) 55%,rgba(0,0,0,0) 72%)"></div><svg class="a" style="left:4.8px;top:19.8px;" width="22.3" height="22.3" viewBox="0 0 40 40"><use href="#avAlice"/></svg><div class="t" style="left:29px;top:24.1px;font-size:12px;color:#15306a">Alice</div><div class="t" style="left:5px;top:47.3px;font-size:12px;color:#111">Task</div><div class="t" style="left:5px;top:63.1px;font-size:12px;color:#15345a">Business trip</div></div>
<div class="a" style="left:1203.8px;top:250.0px;width:118.3px;height:270.7px;background:#5aacfd;border-radius:3px;overflow:hidden"><div class="a" style="left:0;top:0;width:100%;height:15.2px;background:#d11616"></div><div class="a" style="left:3.3px;top:1.6px;width:12.4px;height:11.9px;background:#ff6464"></div><div class="t" style="left:16px;right:0;text-align:center;top:3.5px;font-size:11.5px;color:#fff;-webkit-text-stroke:0">9:00-15:30</div><div class="a" style="left:2.3px;top:17.3px;width:27.5px;height:27px;border-radius:50%;background:radial-gradient(circle,rgba(0,0,0,0.22) 55%,rgba(0,0,0,0) 72%)"></div><svg class="a" style="left:4.8px;top:19.8px;" width="22.3" height="22.3" viewBox="0 0 40 40"><use href="#avPhilip"/></svg><div class="t" style="left:29px;top:24.1px;font-size:12px;color:#1f4a9a">Philip</div><div class="t" style="left:5px;top:47.3px;font-size:12px;color:#111">Task</div><div class="t" style="left:5px;top:63.1px;font-size:12px;color:#1f4a9a">Meeting</div></div>
<div class="a" style="left:1333.0px;top:229.0px;width:118.3px;height:207.8px;background:#5ccf0b;border-radius:3px;overflow:hidden"><div class="a" style="left:0;top:0;width:100%;height:15.2px;background:#d11616"></div><div class="a" style="left:3.3px;top:1.6px;width:12.4px;height:11.9px;background:#ff6464"></div><div class="t" style="left:16px;right:0;text-align:center;top:3.5px;font-size:11.5px;color:#fff;-webkit-text-stroke:0">8:30-13:30</div><div class="a" style="left:2.3px;top:17.3px;width:27.5px;height:27px;border-radius:50%;background:radial-gradient(circle,rgba(0,0,0,0.22) 55%,rgba(0,0,0,0) 72%)"></div><svg class="a" style="left:4.8px;top:19.8px;" width="22.3" height="22.3" viewBox="0 0 40 40"><use href="#avJohn"/></svg><div class="t" style="left:29px;top:24.1px;font-size:12px;color:#15306a">John</div><div class="t" style="left:5px;top:47.3px;font-size:12px;color:#111">Task</div><div class="t" style="left:5px;top:63.1px;font-size:12px;color:#15306a">Deadline</div></div>
<div class="a" style="left:943.7px;top:431.5px;width:129.3px;height:1.3px;background:rgba(100,100,100,0.75)"></div>
<div class="a" style="left:1461.5px;top:164px;width:10px;height:427px;background:#eef0f5;border-left:1px solid #e0e3ea"></div>
<svg class="a" style="left:1461px;top:164px" width="11" height="10"><path d="M1.8 7.2 H8.8 L5.3 3.3 Z" fill="#555"/></svg>
<svg class="a" style="left:1462px;top:583.5px" width="11" height="10"><path d="M1.8 2.8 H8.8 L5.3 6.7 Z" fill="#555"/></svg>
<div class="a" style="left:1463.4px;top:293px;width:7px;height:170.5px;border-radius:3.5px;background:#b9b9c5"></div>
<svg class="a" style="left:775px;top:591px" width="14" height="17"><path d="M10 1.5 L3 8.2 L10 15" fill="none" stroke="#555" stroke-width="1.3"/></svg>
<div class="t tx" style="left:792.8px;top:593.6px;font-size:11px;letter-spacing:-0.1px">Previous page</div>
<div class="t tx" style="left:891px;top:593.6px;font-size:11px">Next page</div>
<svg class="a" style="left:946px;top:591px" width="14" height="17"><path d="M3 1.5 L10 8.2 L3 15" fill="none" stroke="#555" stroke-width="1.3"/></svg>
</body></html>
